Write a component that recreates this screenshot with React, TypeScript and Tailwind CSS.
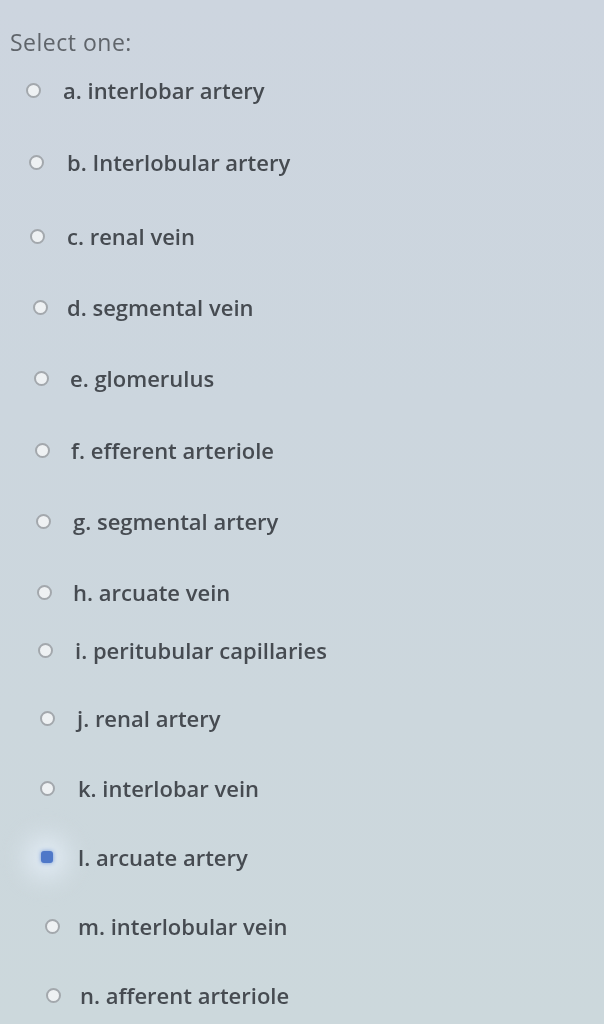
const options = [
  { label: "a. interlobar artery", row: "mt-0 pl-[26px]", gap: "gap-[22px]" },
  { label: "b. Interlobular artery", row: "mt-[48px] pl-[29px]", gap: "gap-[23px]" },
  { label: "c. renal vein", row: "mt-[50px] pl-[30px]", gap: "gap-[22px]" },
  { label: "d. segmental vein", row: "mt-[47px] pl-[33px]", gap: "gap-[19px]" },
  { label: "e. glomerulus", row: "mt-[47px] pl-[34px]", gap: "gap-[21px]" },
  { label: "f. efferent arteriole", row: "mt-[48px] pl-[35px]", gap: "gap-[21px]" },
  { label: "g. segmental artery", row: "mt-[47px] pl-[36px]", gap: "gap-[22px]" },
  { label: "h. arcuate vein", row: "mt-[47px] pl-[37px]", gap: "gap-[21px]" },
  { label: "i. peritubular capillaries", row: "mt-[34px] pl-[38px]", gap: "gap-[22px]" },
  { label: "j. renal artery", row: "mt-[44px] pl-[40px]", gap: "gap-[22px]" },
  { label: "k. interlobar vein", row: "mt-[46px] pl-[40px]", gap: "gap-[23px]" },
  { label: "l. arcuate artery", row: "mt-[45px] pl-[39px]", gap: "gap-[24px]", checked: true },
  { label: "m. interlobular vein", row: "mt-[45px] pl-[45px]", gap: "gap-[18px]" },
  { label: "n. afferent arteriole", row: "mt-[45px] pl-[46px]", gap: "gap-[19px]" },
]

const Radio = ({ checked }: { checked?: boolean }) => {
  if (checked) {
    return (
      <span className="relative flex h-[15px] w-[15px] shrink-0 items-center justify-center">
        <span className="absolute -inset-[14px] rounded-full bg-[#e0eaf3] blur-md" />
        <span className="relative h-[12px] w-[12px] rounded-[3px] bg-[#4f78c8] shadow-[0_0_4px_#7397da] blur-[0.5px]" />
      </span>
    )
  }
  return <span className="h-[15px] w-[15px] shrink-0 rounded-full border-[2.5px] border-[#a3a8ad] bg-[#eef1f3] blur-[0.7px]" />
}

export default function App() {
  return (
    <div className="min-h-screen w-full bg-[linear-gradient(180deg,#cdd5df_0%,#ccd6de_40%,#ccd8dc_100%)] font-['Open_Sans',sans-serif]">
      <div className="flex flex-col pt-[30px]">
        <p className="h-[24px] pl-[10px] text-[23px] leading-[24px] tracking-[0.5px] text-[#5f646a] blur-[0.5px]">Select one:</p>
        <div className="mt-[24px] flex flex-col">
          {options.map((o) => (
            <label key={o.label} className={`flex h-[24px] items-center ${o.row} ${o.gap}`}>
              <Radio checked={o.checked} />
              <span className="text-[22px] font-semibold leading-[24px] text-[#464b51] blur-[0.6px]">{o.label}</span>
            </label>
          ))}
        </div>
      </div>
    </div>
  )
}
